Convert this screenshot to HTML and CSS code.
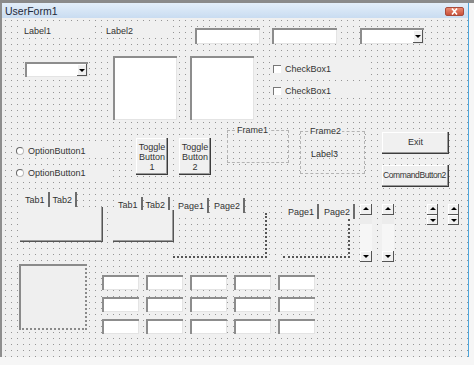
FILE: index.html
```html
<!DOCTYPE html>
<html lang="en">
<head>
    <meta charset="UTF-8">
    <title>UserForm1</title>
    <link rel="stylesheet" href="styles.css">
</head>
<body>
    <div class="designer">
        <div class="form">
            <div class="titlebar">
                <span class="title">UserForm1</span>
                <span class="close">
                    <svg width="11" height="7" viewBox="0 0 11 7"><path d="M3 0.5 L8 6.5 M8 0.5 L3 6.5" stroke="#fff" stroke-width="1.6"/></svg>
                </span>
            </div>
            <div class="canvas">
                <!-- first row -->
                <div class="ctl label lbl1">Label1</div>
                <div class="ctl label lbl2">Label2</div>
                <div class="ctl textbox tb1"></div>
                <div class="ctl textbox tb2"></div>
                <div class="ctl textbox combo cb1"><span class="drop"></span></div>

                <div class="ctl textbox combo cb2"><span class="drop"></span></div>
                <div class="ctl textbox listbox lb1"></div>
                <div class="ctl textbox listbox lb2"></div>
                <div class="ctl check chk1"><span class="box"></span>CheckBox1</div>
                <div class="ctl check chk2"><span class="box"></span>CheckBox1</div>

                <!-- buttons row -->
                <div class="ctl option opt1"><span class="radio"></span>OptionButton1</div>
                <div class="ctl option opt2"><span class="radio"></span>OptionButton1</div>
                <div class="ctl button toggle tg1">Toggle<br>Button<br>1</div>
                <div class="ctl button toggle tg2">Toggle<br>Button<br>2</div>
                <div class="ctl frame fr1"><span class="caption">Frame1</span></div>
                <div class="ctl frame fr2"><span class="caption">Frame2</span><span class="inner-label">Label3</span></div>
                <div class="ctl button cmd exit">Exit</div>
                <div class="ctl button cmd cmd2">CommandButton2</div>

                <!-- tabs and pages -->
                <div class="ctl tabstrip ts1">
                    <div class="tabs"><span class="tab">Tab1</span><span class="tab">Tab2</span></div>
                    <div class="tab-body"></div>
                </div>
                <div class="ctl tabstrip ts2">
                    <div class="tabs"><span class="tab">Tab1</span><span class="tab">Tab2</span></div>
                    <div class="tab-body"></div>
                </div>
                <div class="ctl multipage mp1">
                    <div class="tabs"><span class="tab">Page1</span><span class="tab">Page2</span></div>
                    <div class="page-body"></div>
                </div>
                <div class="ctl multipage mp2">
                    <div class="tabs"><span class="tab">Page1</span><span class="tab">Page2</span></div>
                    <div class="page-body"></div>
                </div>

                <div class="ctl scroll sb1"><span class="arrow up"></span><span class="track"></span><span class="arrow down"></span></div>
                <div class="ctl scroll sb2"><span class="arrow up"></span><span class="track"></span><span class="arrow down"></span></div>
                <div class="ctl spin sp1"><span class="arrow up"></span><span class="arrow down"></span></div>
                <div class="ctl spin sp2"><span class="arrow up"></span><span class="arrow down"></span></div>

                <!-- image and text box grid -->
                <div class="ctl image img1"></div>
                <div class="ctl grid">
                    <div class="textbox"></div><div class="textbox"></div><div class="textbox"></div><div class="textbox"></div><div class="textbox"></div>
                    <div class="textbox"></div><div class="textbox"></div><div class="textbox"></div><div class="textbox"></div><div class="textbox"></div>
                    <div class="textbox"></div><div class="textbox"></div><div class="textbox"></div><div class="textbox"></div><div class="textbox"></div>
                </div>
            </div>
        </div>
    </div>
</body>
</html>
```

FILE: styles.css
```css
* {
    margin: 0;
    padding: 0;
    box-sizing: border-box;
}

body {
    font-family: "Liberation Sans", Arial, sans-serif;
    font-size: 9px;
    color: #333;
    background: #f6f6f6;
}

.designer {
    width: 474px;
    height: 365px;
    padding-top: 3px;
    background: linear-gradient(#8a8a8a 0, #8a8a8a 3px, #f6f6f6 3px);
}

.form {
    width: 469px;
    border-left: 2px solid #8e8e8e;
    border-right: 1px solid #4ea6dc;
}

.titlebar {
    height: 15px;
    display: flex;
    align-items: center;
    justify-content: space-between;
    padding: 0 4px 0 3px;
    background: linear-gradient(#e3eef9, #c9dcf1);
}

.title {
    font-size: 10.5px;
    color: #1f2a3a;
}

.close {
    width: 19px;
    height: 9px;
    margin-top: 2px;
    display: flex;
    align-items: center;
    justify-content: center;
    background: linear-gradient(#e98a72, #c9513a);
    border: 1px solid #a84a3a;
    border-radius: 2px;
}

.canvas {
    position: relative;
    height: 339px;
    background-color: #f0f0f0;
    background-image: radial-gradient(circle at 1.5px 1.5px, #959595 0.6px, transparent 1px);
    background-size: 6px 6px;
    background-position: 2px 1px;
}

.ctl {
    position: absolute;
}

/* labels */
.label {
    background: #f0f0f0;
    height: 12px;
    line-height: 12px;
    padding-left: 2px;
}
.lbl1 { left: 20px; top: 7px; width: 70px; }
.lbl2 { left: 102px; top: 7px; width: 68px; }

/* text boxes */
.textbox {
    background: #fff;
    box-shadow: inset 2px 2px 0 #8d8d8d, inset -1px -1px 0 #e4e4e4;
}
.tb1 { left: 193px; top: 10px; width: 65px; height: 16px; }
.tb2 { left: 270px; top: 10px; width: 65px; height: 16px; }

.combo .drop {
    position: absolute;
    right: 1px;
    top: 2px;
    bottom: 1px;
    width: 10px;
    background: #f0f0f0;
    box-shadow: inset -1px -1px 0 #555, inset 1px 1px 0 #fff;
}
.combo .drop::after {
    content: "";
    position: absolute;
    left: 2px;
    top: 5px;
    border-left: 3px solid transparent;
    border-right: 3px solid transparent;
    border-top: 3px solid #000;
}
.cb1 { left: 358px; top: 10px; width: 64px; height: 16px; }
.cb2 { left: 23px; top: 44px; width: 63px; height: 15px; }

.lb1 { left: 111px; top: 38px; width: 64px; height: 64px; }
.lb2 { left: 188px; top: 38px; width: 64px; height: 64px; }

/* check boxes and option buttons */
.check, .option {
    display: flex;
    align-items: center;
    gap: 4px;
    background: #f0f0f0;
    height: 14px;
}
.check { width: 94px; padding-left: 1px; }
.chk1 { left: 270px; top: 44px; }
.chk2 { left: 270px; top: 66px; }

.check .box {
    width: 8px;
    height: 8px;
    background: #fff;
    border-top: 1px solid #777;
    border-left: 1px solid #777;
}

.option { width: 95px; padding-left: 2px; }
.opt1 { left: 12px; top: 126px; }
.opt2 { left: 12px; top: 148px; }

.option .radio {
    width: 8px;
    height: 8px;
    border-radius: 50%;
    background: #fff;
    border: 1px solid #bbb;
    border-top-color: #666;
    border-left-color: #666;
}

/* buttons */
.button {
    background: #f0f0f0;
    box-shadow: inset -1px -1px 0 #3c3c3c, inset -2px -2px 0 #9a9a9a, inset 1px 1px 0 #fff;
    text-align: center;
}
.toggle {
    width: 32px;
    height: 37px;
    padding-top: 4px;
    line-height: 10px;
}
.tg1 { left: 134px; top: 120px; }
.tg2 { left: 177px; top: 120px; }

.cmd {
    width: 67px;
    height: 22px;
    line-height: 21px;
}
.exit { left: 380px; top: 114px; }
.cmd2 { left: 380px; top: 147px; font-size: 8.5px; letter-spacing: -0.4px; padding-right: 2px; }

/* frames */
.frame {
    border: 1px dashed #b4b4b4;
}
.frame .caption {
    position: absolute;
    left: 8px;
    top: -6px;
    padding: 0 1px;
    background: #f0f0f0;
    line-height: 10px;
}
.frame .inner-label {
    position: absolute;
    left: 10px;
    top: 17px;
}
.fr1 { left: 225px; top: 112px; width: 62px; height: 33px; }
.fr2 { left: 298px; top: 113px; width: 65px; height: 43px; }

/* tab strips and multipages */
.tabstrip, .multipage {
    display: flex;
    flex-direction: column;
}
.tabs {
    display: flex;
    height: 15px;
    padding-left: 3px;
}
.tab {
    padding: 2px 3px 0 2px;
    line-height: 12px;
    border-right: 2px solid #6c6c6c;
    background: #f0f0f0;
}
.tab + .tab { margin-left: 1px; }

.tab-body {
    flex: 1;
    background: #f0f0f0;
    box-shadow: inset -1px -1px 0 #555, inset -2px -2px 0 #9c9c9c;
}
.ts1 { left: 18px; top: 174px; width: 83px; height: 50px; }
.ts2 { left: 111px; top: 179px; width: 61px; height: 45px; }
.ts2 .tabs { height: 13px; }

.page-body {
    flex: 1;
    border-right: 2px dotted #555;
    border-bottom: 2px dotted #555;
}
.multipage .tabs { padding-left: 1px; }
.multipage .tab { padding-left: 4px; }
.mp1 { left: 171px; top: 180px; width: 94px; height: 60px; }
.mp2 { left: 281px; top: 186px; width: 67px; height: 54px; }

/* scroll bars and spin buttons */
.scroll, .spin {
    display: flex;
    flex-direction: column;
    width: 12px;
}
.arrow {
    position: relative;
    height: 10px;
    background: #f0f0f0;
    box-shadow: inset -1px -1px 0 #555, inset 1px 1px 0 #fff;
}
.arrow::after {
    content: "";
    position: absolute;
    left: 3px;
    top: 3px;
    border-left: 3px solid transparent;
    border-right: 3px solid transparent;
}
.arrow.up::after { border-bottom: 3px solid #000; }
.arrow.down::after { border-top: 3px solid #000; top: 4px; }
.scroll .arrow { height: 11px; }
.track {
    flex: 1;
    background: #f6f6f6;
}
.scroll .arrow.up { margin-bottom: 1px; }
.scroll .track { border-top: 8px solid #ececec; }
.sb1 { left: 358px; top: 186px; height: 58px; }
.sb2 { left: 380px; top: 186px; height: 58px; }
.spin .arrow { flex: 1; }
.sp1 { left: 425px; top: 186px; height: 21px; width: 11px; }
.sp2 { left: 446px; top: 186px; height: 21px; width: 11px; }

/* image and text box grid */
.image {
    background: #efefef;
    border: 2px solid #8a8a8a;
    border-right-style: dotted;
    border-bottom-style: dotted;
}
.img1 { left: 17px; top: 246px; width: 68px; height: 66px; }

.grid {
    left: 100px;
    top: 257px;
    display: grid;
    grid-template-columns: repeat(5, 37px);
    grid-auto-rows: 15px;
    column-gap: 7px;
    row-gap: 7px;
}
```
